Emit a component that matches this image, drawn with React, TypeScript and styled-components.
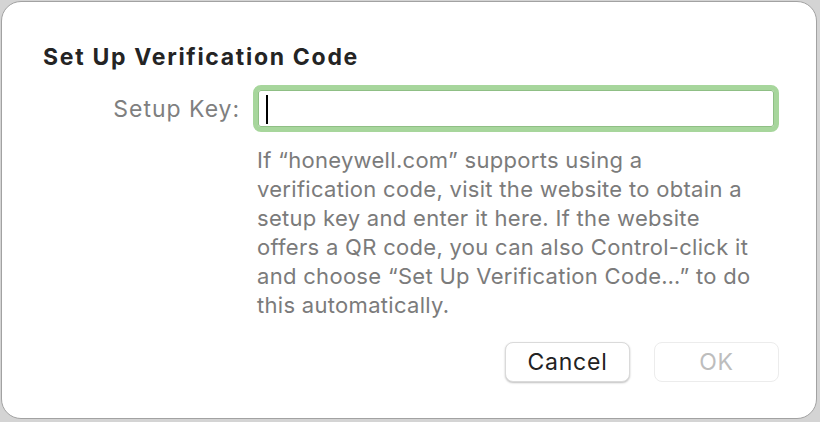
import { FC } from 'react';
import styled, { createGlobalStyle } from 'styled-components';

const GlobalStyle = createGlobalStyle`
    html, body {
        margin: 0;
        padding: 0;
        background: #d4d4d4;
        font-family: Inter, "Liberation Sans", Arial, sans-serif;
    }
`

const HELP_LINES = [
    'If “honeywell.com” supports using a',
    'verification code, visit the website to obtain a',
    'setup key and enter it here. If the website',
    'offers a QR code, you can also Control-click it',
    'and choose “Set Up Verification Code…” to do',
    'this automatically.',
]

const Sheet = styled.div`
    box-sizing: border-box;
    width: 816px;
    height: 418px;
    margin: 1px 0 0 1px;
    background: #ffffff;
    border: 1px solid #a2a2a2;
    border-radius: 20px;
    padding: 40px 37px 0 41px;
    display: flex;
    flex-direction: column;
`

const Title = styled.h1`
    margin: 0;
    font-size: 23px;
    font-weight: 700;
    letter-spacing: 1.7px;
    color: #242424;
    line-height: 30px;
    white-space: nowrap;
`

const FieldRow = styled.div`
    display: flex;
    align-items: center;
    gap: 13px;
    margin-top: 13px;
`

const Label = styled.label`
    width: 198px;
    text-align: right;
    font-size: 23px;
    letter-spacing: 1px;
    color: #7f7f7f;
    white-space: nowrap;
`

const KeyInput = styled.div`
    box-sizing: border-box;
    width: 528px;
    height: 47px;
    border: 5px solid #a7d69c;
    border-radius: 8px;
    padding: 5px 0 0 8px;
    display: flex;
    align-items: flex-start;
    box-shadow: inset 0 0 0 1px #8fbf85;
`

const Caret = styled.span`
    width: 2px;
    height: 29px;
    background: #000;
`

const Help = styled.p`
    margin: 14px 0 0 214px;
    font-size: 22px;
    letter-spacing: 0.3px;
    line-height: 29px;
    color: #7b7b7b;
    white-space: nowrap;
`

const Actions = styled.div`
    display: flex;
    justify-content: flex-end;
    gap: 24px;
    margin-top: 22px;
`

const Button = styled.button<{ $disabled?: boolean }>`
    width: 125px;
    height: 40px;
    border-radius: 8px;
    background: #fff;
    font-family: inherit;
    font-size: 23px;
    letter-spacing: 0.8px;
    color: ${p => (p.$disabled ? '#bdbdbd' : '#222')};
    border: 1px solid ${p => (p.$disabled ? '#ececec' : '#dadada')};
    box-shadow: ${p => (p.$disabled ? 'none' : '0 1px 2px rgba(0,0,0,0.25)')};
    padding: 0;
`

const App: FC = () => {
    return (
        <>
            <GlobalStyle />
            <Sheet>
                <Title>Set Up Verification Code</Title>
                <FieldRow>
                    <Label>Setup Key:</Label>
                    <KeyInput>
                        <Caret />
                    </KeyInput>
                </FieldRow>
                <Help>
                    {HELP_LINES.map((line, i) => (
                        <span key={i}>
                            {line}
                            <br />
                        </span>
                    ))}
                </Help>
                <Actions>
                    <Button>Cancel</Button>
                    <Button $disabled>OK</Button>
                </Actions>
            </Sheet>
        </>
    )
}

export default App
